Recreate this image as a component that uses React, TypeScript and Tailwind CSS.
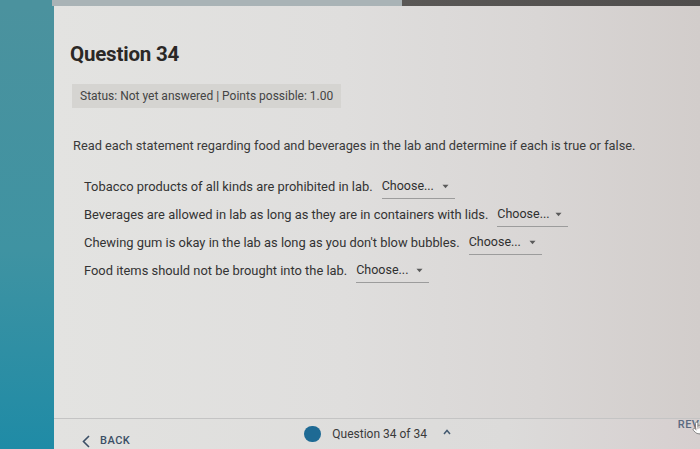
import React from "react";
import { Pointer } from "lucide-react";

const rows = [
  { text: "Tobacco products of all kinds are prohibited in lab.", w: 73 },
  { text: "Beverages are allowed in lab as long as they are in containers with lids.", w: 71 },
  { text: "Chewing gum is okay in the lab as long as you don't blow bubbles.", w: 73 },
  { text: "Food items should not be brought into the lab.", w: 73 },
];

function Caret() {
  return (
    <svg width="7" height="5" viewBox="0 0 7 5" className="shrink-0">
      <path d="M0.5 0.8 L6.5 0.8 L3.5 4.3 Z" fill="#5a5a5a" />
    </svg>
  );
}

export default function App() {
  return (
    <div
      className="w-[700px] h-[449px] flex flex-col overflow-hidden relative text-[#333]"
      style={{ fontFamily: "Roboto, 'Noto Sans', sans-serif" }}
    >
      {/* top bar */}
      <div className="h-[6px] flex shrink-0">
        <div className="w-[52px] bg-[#4b929e]" />
        <div className="w-[350px] bg-[#a9b3b6]" />
        <div className="flex-1 bg-[linear-gradient(90deg,#5a5856,#4f4d4c)]" />
      </div>
      <div className="flex flex-1 min-h-0">
        {/* teal strip */}
        <div className="w-[54px] shrink-0 bg-[linear-gradient(180deg,#4b929e_0%,#3f93a2_55%,#1f8ba6_100%)]" />
        {/* panel */}
        <div className="flex-1 flex flex-col bg-[linear-gradient(90deg,#e3e3e1_0%,#dfdedd_45%,#d9d6d5_75%,#d2cdcb_100%)]">
          <div className="flex-1 flex flex-col items-start pl-[16px]">
            <h1 className="mt-[36px] text-[20.5px] leading-[24px] font-bold text-[#2b2826] tracking-[-0.2px]">
              Question 34
            </h1>
            <div className="mt-[18px] ml-[2px] h-[24px] px-[8px] flex items-center bg-[#d5d4d1] text-[12px] text-[#444]">
              Status: Not yet answered | Points possible: 1.00
            </div>
            <p className="mt-[29px] ml-[3px] text-[12.8px] leading-[18px] text-[#3a3a3a]">
              Read each statement regarding food and beverages in the lab and determine if each is true or false.
            </p>
            <div className="mt-[18px] ml-[14px] flex flex-col">
              {rows.map((r, i) => (
                <div key={i} className="h-[28px] flex items-center text-[12.9px] text-[#333]">
                  <span>{r.text}</span>
                  <div
                    className="ml-[9px] h-[24px] flex items-center justify-between border-b border-[#9c9c9c] pr-[6px]"
                    style={{ width: r.w }}
                  >
                    <span className="text-[12.5px] text-[#2f2f2f]">Choose...</span>
                    <Caret />
                  </div>
                </div>
              ))}
            </div>
          </div>
          {/* footer */}
          <div className="h-[31px] shrink-0 border-t border-[#c4c4c4] flex items-start bg-[linear-gradient(90deg,#e2e2e0,#dcdbda_70%,#d6cfcf)] relative">
            <div className="ml-[28px] mt-[14px] flex items-center gap-[10px] text-[#3b4f66]">
              <svg width="8" height="13" viewBox="0 0 8 13">
                <path d="M7 1 L1.5 6.5 L7 12" stroke="#3b4f66" strokeWidth="1.6" fill="none" />
              </svg>
              <span className="text-[11px] font-medium tracking-[0.5px]">BACK</span>
            </div>
            <div className="ml-[174px] mt-[6px] flex items-center">
              <div className="w-[17px] h-[16px] rounded-full bg-[#1e6a94]" />
              <span className="ml-[11px] text-[12px] text-[#3a3a3a]">Question 34 of 34</span>
              <svg width="8" height="6" viewBox="0 0 8 6" className="ml-[16px] -mt-[4px]">
                <path d="M1 5 L4 1.5 L7 5" stroke="#445a70" strokeWidth="1.5" fill="none" />
              </svg>
            </div>
            <div className="ml-auto mr-[-20px] mt-[-2px] text-[11px] font-medium text-[#5a6a80] tracking-[0.5px] relative">
              REVIEW
              <Pointer className="absolute left-[14px] top-[4px] w-[14px] h-[14px] text-[#777] fill-white" strokeWidth={1.5} />
            </div>
          </div>
        </div>
      </div>
    </div>
  );
}
